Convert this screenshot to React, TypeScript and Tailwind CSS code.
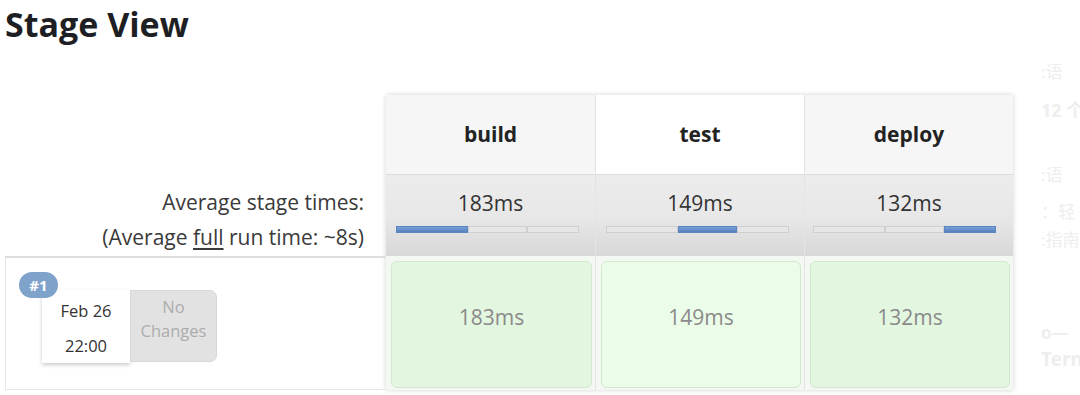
import React from "react";

const font = { fontFamily: '"Open Sans", "Noto Sans", "Noto Sans CJK SC", sans-serif' };

function Bar({ active }: { active: number }) {
  const segs = [72, 59, 52];
  return (
    <div className="flex h-[7px] w-[183px]">
      {segs.map((w, i) => (
        <div
          key={i}
          style={{ width: w }}
          className={
            i === active
              ? "h-full bg-gradient-to-b from-[#7a9fd6] to-[#5680c0] border border-[#5b84c2]"
              : "h-full bg-[#e6e6e6] border border-[#cfcfcf]"
          }
        />
      ))}
    </div>
  );
}

export default function App() {
  const stages = [
    { name: "build", avg: "183ms", head: "bg-[#f6f6f6]", cell: "bg-[#e3f6df]", active: 0, shift: "mr-[7px]" },
    { name: "test", avg: "149ms", head: "bg-white", cell: "bg-[#ebfce8]", active: 1, shift: "mr-[6px]" },
    { name: "deploy", avg: "132ms", head: "bg-[#f6f6f6]", cell: "bg-[#e3f6df]", active: 2, shift: "mr-[10px]" },
  ];
  return (
    <div className="w-[1080px] h-[395px] bg-white overflow-hidden flex text-[#333]" style={font}>
      <div className="pl-[5px] flex flex-col">
        <h1 className="text-[34px] font-bold leading-none pt-[7px] h-[95px] text-[#1e1f24]">
          Stage View
        </h1>
        <div className="flex">
          {/* left column */}
          <div className="w-[381px] flex flex-col">
            <div className="h-[79px]" />
            <div className="h-[82px] flex flex-col items-end pt-[11px] pr-[22px] text-[21px] leading-[35px] text-[#3a3a3a]">
              <div>Average stage times:</div>
              <div>
                (Average <span className="underline underline-offset-[3px]">full</span> run time: ~8s)
              </div>
            </div>
            <div className="relative h-[134px] border-t-[2px] border-[#dedede] border-l border-b border-l-[#e6e6e6] border-b-[#e6e6e6]">
              <div className="absolute left-[13px] top-[14px] w-[39px] h-[26px] rounded-full bg-[#7fa2cb] text-white text-[15px] font-bold flex items-center justify-center z-10">
                #1
              </div>
              <div className="flex pl-[36px] pt-[32px]">
                <div className="w-[88px] h-[73px] bg-white shadow-[0_2px_4px_rgba(0,0,0,0.2)] flex flex-col items-center justify-center text-[16.5px] leading-[35px] text-[#333] pt-[2px]">
                  <div>Feb 26</div>
                  <div>22:00</div>
                </div>
                <div className="w-[87px] h-[72px] bg-[#e2e2e2] rounded-r-[7px] border border-[#d8d8d8] flex flex-col items-center pt-[4px] text-[16.5px] leading-[24px] text-[#acacac]">
                  <div>No</div>
                  <div>Changes</div>
                </div>
              </div>
            </div>
          </div>
          {/* table */}
          <div className="flex shadow-[0_0_5px_rgba(0,0,0,0.18)]">
            {stages.map((s, i) => (
              <div key={s.name} className={"w-[209px] flex flex-col " + (i > 0 ? "border-l border-[#e4e4e4]" : "")}>
                <div className={"h-[79px] flex items-center justify-center text-[21px] font-bold text-[#222] " + s.head}>
                  {s.name}
                </div>
                <div className="h-[82px] border-t border-[#dcdcdc] bg-gradient-to-b from-[#ececec] via-[#e8e8e8] to-[#d8d8d8] flex flex-col items-center pt-[15px]">
                  <div className="text-[21px] leading-[26px] text-[#333]">{s.avg}</div>
                  <div className={"mt-[10px] " + s.shift}>
                    <Bar active={s.active} />
                  </div>
                </div>
                <div className="h-[134px] bg-[#f4f8f3] p-[5px] pr-[3px] pb-[2px]">
                  <div
                    className={
                      "h-full rounded-[6px] border border-[#d3e8cf] flex items-center justify-center text-[21px] text-[#8a8a8a] pb-[14px] " +
                      s.cell
                    }
                  >
                    {s.avg}
                  </div>
                </div>
              </div>
            ))}
          </div>
        </div>
      </div>
      {/* faint background text at right edge */}
      <div className="ml-[28px] flex flex-col text-[#eeeeee] text-[17px] whitespace-nowrap pt-[60px]" style={{ fontFamily: '"Noto Sans", "Noto Sans CJK SC", sans-serif' }}>
        <div className="h-[24px] leading-[24px]">:语</div>
        <div className="h-[52px] leading-[52px] font-bold text-[18px]">12 个</div>
        <div className="h-[19px]" />
        <div className="h-[40px] leading-[40px]">:语</div>
        <div className="h-[34px] leading-[34px]">：轻</div>
        <div className="h-[22px] leading-[22px]">:指南</div>
        <div className="h-[69px]" />
        <div className="h-[26px] leading-[26px] font-bold">o—</div>
        <div className="h-[26px] leading-[26px] font-bold text-[19px]">Tern</div>
      </div>
    </div>
  );
}
